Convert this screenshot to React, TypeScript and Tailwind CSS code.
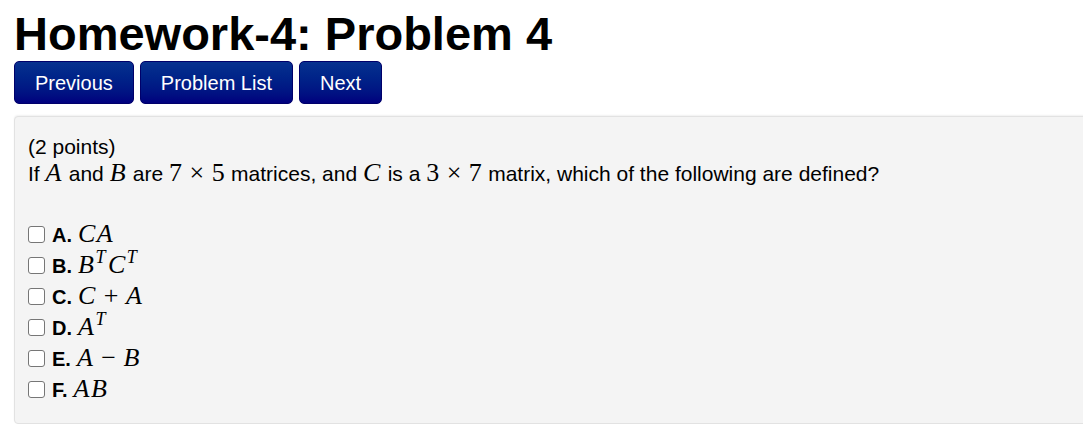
import React from 'react';

const sans = "font-['Liberation_Sans',Arial,sans-serif]";
const serif = "font-['Liberation_Serif','Times_New_Roman',serif]";

function M({ children }: { children: React.ReactNode }) {
  return <span className={`${serif} text-[26px] leading-none tracking-[0.5px]`}>{children}</span>;
}

function I({ children }: { children: React.ReactNode }) {
  return <span className="pr-[1px] italic">{children}</span>;
}

function T() {
  return <sup className="relative -top-[10px] pr-[2px] text-[18px] italic leading-none">T</sup>;
}

function Op({ children }: { children: React.ReactNode }) {
  return <span className="px-[7px]">{children}</span>;
}

const options: { key: string; math: React.ReactNode }[] = [
  { key: 'A', math: <><I>C</I><I>A</I></> },
  { key: 'B', math: <><I>B</I><T /><I>C</I><T /></> },
  { key: 'C', math: <><I>C</I><Op>+</Op><I>A</I></> },
  { key: 'D', math: <><I>A</I><T /></> },
  { key: 'E', math: <><I>A</I><Op>−</Op><I>B</I></> },
  { key: 'F', math: <><I>A</I><I>B</I></> },
];

function NavButton({ label }: { label: string }) {
  return (
    <button className="h-[43px] rounded-[5px] border border-[#00006a] bg-gradient-to-b from-[#07318f] to-[#00007e] px-[20px] text-[20px] text-white">
      {label}
    </button>
  );
}

export default function App() {
  return (
    <div className={`h-[433px] w-[1083px] overflow-hidden bg-white text-black ${sans}`}>
      <div className="pl-[14px]">
        <h1 className="pt-[10px] text-[47px] font-bold leading-[47px]">Homework-4: Problem 4</h1>
        <div className="mt-[4px] flex gap-[6px]">
          <NavButton label="Previous" />
          <NavButton label="Problem List" />
          <NavButton label="Next" />
        </div>

        <div className="mt-[12px] w-[1100px] rounded-[4px] border border-[#e2e2e2] bg-[#f4f4f4] px-[13px] pb-[18px] pt-[16px] shadow-[0_-1px_2px_rgba(0,0,0,0.06)]">
          <p className="text-[21px] leading-[27px]">(2 points)</p>
          <p className="text-[21px] leading-[27px]">
            If <M><I>A</I></M> and <M><I>B</I></M> are <M>7<Op>×</Op>5</M> matrices, and <M><I>C</I></M> is a{' '}
            <M>3<Op>×</Op>7</M> matrix, which of the following are defined?
          </p>

          <div className="mt-[32px] flex flex-col">
            {options.map((o) => (
              <label key={o.key} className="flex h-[31px] items-center">
                <span className="h-[17px] w-[17px] rounded-[3px] border-[1.5px] border-[#767676] bg-white" />
                <span className="ml-[7px] text-[20px] font-bold">{o.key}.</span>
                <span className="ml-[6px]">
                  <M>{o.math}</M>
                </span>
              </label>
            ))}
          </div>
        </div>
      </div>
    </div>
  );
}
